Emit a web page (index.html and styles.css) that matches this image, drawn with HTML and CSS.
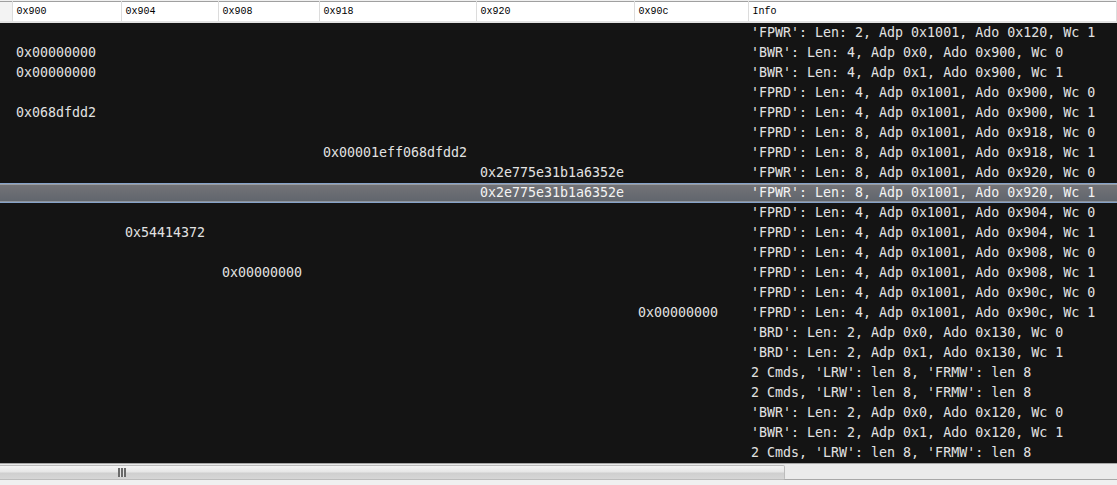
FILE: index.html
```html
<!DOCTYPE html>
<html lang="en">
  <head>
    <meta charset="UTF-8" />
    <title>EtherCAT frames</title>
    <link rel="stylesheet" href="styles.css">
  </head>
  <body>
    <div class="list">
      <table class="grid">
        <colgroup>
          <col class="c-hdr" />
          <col class="c-900" />
          <col class="c-904" />
          <col class="c-908" />
          <col class="c-918" />
          <col class="c-920" />
          <col class="c-90c" />
          <col class="c-info" />
        </colgroup>
        <thead>
          <tr>
            <th class="rowhead"></th>
            <th>0x900</th>
            <th>0x904</th>
            <th>0x908</th>
            <th>0x918</th>
            <th>0x920</th>
            <th>0x90c</th>
            <th>Info</th>
          </tr>
        </thead>
        <tbody>
          <tr><td></td><td></td><td></td><td></td><td></td><td></td><td></td><td>'FPWR': Len: 2, Adp 0x1001, Ado 0x120, Wc 1</td></tr>
          <tr><td></td><td>0x00000000</td><td></td><td></td><td></td><td></td><td></td><td>'BWR': Len: 4, Adp 0x0, Ado 0x900, Wc 0</td></tr>
          <tr><td></td><td>0x00000000</td><td></td><td></td><td></td><td></td><td></td><td>'BWR': Len: 4, Adp 0x1, Ado 0x900, Wc 1</td></tr>
          <tr><td></td><td></td><td></td><td></td><td></td><td></td><td></td><td>'FPRD': Len: 4, Adp 0x1001, Ado 0x900, Wc 0</td></tr>
          <tr><td></td><td>0x068dfdd2</td><td></td><td></td><td></td><td></td><td></td><td>'FPRD': Len: 4, Adp 0x1001, Ado 0x900, Wc 1</td></tr>
          <tr><td></td><td></td><td></td><td></td><td></td><td></td><td></td><td>'FPRD': Len: 8, Adp 0x1001, Ado 0x918, Wc 0</td></tr>
          <tr><td></td><td></td><td></td><td></td><td>0x00001eff068dfdd2</td><td></td><td></td><td>'FPRD': Len: 8, Adp 0x1001, Ado 0x918, Wc 1</td></tr>
          <tr><td></td><td></td><td></td><td></td><td></td><td>0x2e775e31b1a6352e</td><td></td><td>'FPWR': Len: 8, Adp 0x1001, Ado 0x920, Wc 0</td></tr>
          <tr class="selected"><td></td><td></td><td></td><td></td><td></td><td>0x2e775e31b1a6352e</td><td></td><td>'FPWR': Len: 8, Adp 0x1001, Ado 0x920, Wc 1</td></tr>
          <tr><td></td><td></td><td></td><td></td><td></td><td></td><td></td><td>'FPRD': Len: 4, Adp 0x1001, Ado 0x904, Wc 0</td></tr>
          <tr><td></td><td></td><td>0x54414372</td><td></td><td></td><td></td><td></td><td>'FPRD': Len: 4, Adp 0x1001, Ado 0x904, Wc 1</td></tr>
          <tr><td></td><td></td><td></td><td></td><td></td><td></td><td></td><td>'FPRD': Len: 4, Adp 0x1001, Ado 0x908, Wc 0</td></tr>
          <tr><td></td><td></td><td></td><td>0x00000000</td><td></td><td></td><td></td><td>'FPRD': Len: 4, Adp 0x1001, Ado 0x908, Wc 1</td></tr>
          <tr><td></td><td></td><td></td><td></td><td></td><td></td><td></td><td>'FPRD': Len: 4, Adp 0x1001, Ado 0x90c, Wc 0</td></tr>
          <tr><td></td><td></td><td></td><td></td><td></td><td></td><td>0x00000000</td><td>'FPRD': Len: 4, Adp 0x1001, Ado 0x90c, Wc 1</td></tr>
          <tr><td></td><td></td><td></td><td></td><td></td><td></td><td></td><td>'BRD': Len: 2, Adp 0x0, Ado 0x130, Wc 0</td></tr>
          <tr><td></td><td></td><td></td><td></td><td></td><td></td><td></td><td>'BRD': Len: 2, Adp 0x1, Ado 0x130, Wc 1</td></tr>
          <tr><td></td><td></td><td></td><td></td><td></td><td></td><td></td><td>2 Cmds, 'LRW': len 8, 'FRMW': len 8</td></tr>
          <tr><td></td><td></td><td></td><td></td><td></td><td></td><td></td><td>2 Cmds, 'LRW': len 8, 'FRMW': len 8</td></tr>
          <tr><td></td><td></td><td></td><td></td><td></td><td></td><td></td><td>'BWR': Len: 2, Adp 0x0, Ado 0x120, Wc 0</td></tr>
          <tr><td></td><td></td><td></td><td></td><td></td><td></td><td></td><td>'BWR': Len: 2, Adp 0x1, Ado 0x120, Wc 1</td></tr>
          <tr><td></td><td></td><td></td><td></td><td></td><td></td><td></td><td>2 Cmds, 'LRW': len 8, 'FRMW': len 8</td></tr>
        </tbody>
      </table>
    </div>
    <div class="hscroll">
      <div class="thumb"><span class="grip"></span></div>
    </div>
  </body>
</html>
```

FILE: styles.css
```css
body {
  margin: 0;
  width: 1117px;
  height: 485px;
  overflow: hidden;
  background-color: #f0f0f0;
  font-family: "DejaVu Sans Mono", monospace;
}
.list {
  border-top: 1px solid #f0f0f0;
  background-color: #141414;
  height: 462px;
  overflow: hidden;
}
.grid {
  border-collapse: collapse;
  table-layout: fixed;
  width: 1117px;
}
.c-hdr { width: 12px; }
.c-900 { width: 109px; }
.c-904 { width: 97px; }
.c-908 { width: 101px; }
.c-918 { width: 157px; }
.c-920 { width: 158px; }
.c-90c { width: 114px; }
.grid th {
  height: 19px;
  padding: 0 0 0 4px;
  text-align: left;
  font-family: "Liberation Mono", monospace;
  font-size: 10px;
  font-weight: normal;
  color: #000;
  background-color: #fff;
  border-top: 1px solid #a0a0a0;
  border-bottom: 2px solid #e3e3e3;
  border-right: 1px solid #dcdcdc;
  white-space: nowrap;
}
.grid th.rowhead {
  background-color: #f3f3f3;
  padding: 0;
}
.grid td {
  height: 20px;
  padding: 0 0 0 4px;
  font-size: 13.3px;
  color: #e2e2e2;
  white-space: nowrap;
  overflow: hidden;
  line-height: 20px;
}
.grid td:last-child {
  padding-left: 3px;
}
.grid tr.selected td {
  height: 18px;
  line-height: 18px;
  color: #f4f4f4;
  background: linear-gradient(#737377, #5f646c);
  border-top: 1px solid #86a2c8;
  border-bottom: 1px solid #86a2c8;
  box-shadow: inset 0 1px 0 #9a9ca0, inset 0 -1px 0 #8d939c;
}
.hscroll {
  height: 15px;
  border-top: 1px solid #a8a8a8;
  border-bottom: 1px solid #a8a8a8;
  background-color: #ebebeb;
}
.thumb {
  width: 784px;
  height: 13px;
  margin-top: 1px;
  border: 1px solid #bcbcbc;
  border-left: none;
  border-radius: 0 2px 2px 0;
  background: linear-gradient(#f4f4f4 0%, #e6e6e6 45%, #cfcfcf 55%, #d6d6d6 100%);
  display: flex;
  align-items: center;
}
.grip {
  margin-left: 118px;
  width: 8px;
  height: 9px;
  background: repeating-linear-gradient(90deg, #6a6a6a 0 2px, #e6e6e6 2px 3px);
}
```
